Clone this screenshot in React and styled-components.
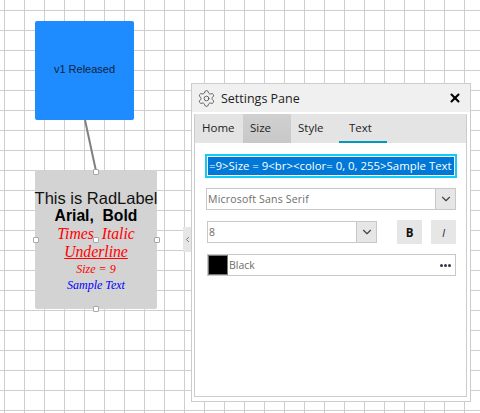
import React from 'react';
import styled, { createGlobalStyle } from 'styled-components';
import { Settings, X, ChevronDown, ChevronLeft } from 'lucide-react';

const Global = createGlobalStyle`
	html, body { margin: 0; padding: 0; background: #fff; }
	* { box-sizing: border-box; }
`;

const Canvas = styled.div`
	position: relative;
	width: 480px;
	height: 413px;
	overflow: hidden;
	background-color: #fff;
	background-image:
		linear-gradient(to right, #cfcfcf 1px, transparent 1px),
		linear-gradient(to bottom, #cfcfcf 1px, transparent 1px);
	background-size: 20px 20px;
	background-position: 4px 10px;
`;

const Connector = styled.svg`
	position: absolute;
	left: 0;
	top: 0;
`;

const Shape = styled.div`
	position: absolute;
	left: ${p => p.x}px;
	top: ${p => p.y}px;
	width: ${p => p.w}px;
	height: ${p => p.h}px;
	background: ${p => p.bg};
	border-radius: 2px;
	padding-bottom: ${p => p.lift || 0}px;
	padding-top: ${p => p.drop || 0}px;
	display: flex;
	flex-direction: column;
	align-items: center;
	justify-content: center;
`;

const ShapeCaption = styled.span`
	font: 11px "Liberation Sans", Arial, sans-serif;
	color: #10233a;
`;

const RichLine = styled.div`
	font-family: ${p => (p.serif ? '"Liberation Serif", serif' : '"Liberation Sans", Arial, sans-serif')};
	font-size: ${p => p.size}px;
	font-weight: ${p => (p.bold ? 700 : 400)};
	font-style: ${p => (p.serif ? 'italic' : 'normal')};
	text-decoration: ${p => (p.underline ? 'underline' : 'none')};
	color: ${p => p.color};
	line-height: ${p => p.lh}px;
	white-space: nowrap;
`;

const Handle = styled.span`
	position: absolute;
	left: ${p => p.x - 3}px;
	top: ${p => p.y - 3}px;
	width: 6px;
	height: 6px;
	background: #fff;
	border: 1px solid #a8a8a8;
	border-radius: 1px;
`;

const DockTab = styled.div`
	position: absolute;
	left: 183px;
	top: 227px;
	width: 9px;
	height: 25px;
	background: #e6e6e6;
	display: flex;
	align-items: center;
	color: #555;
`;

const Pane = styled.div`
	position: absolute;
	left: 191px;
	top: 83px;
	width: 280px;
	height: 319px;
	background: #fff;
	border: 1px solid #ccc;
	display: flex;
	flex-direction: column;
`;

const TitleBar = styled.div`
	height: 28px;
	background: #f0f0f0;
	display: flex;
	align-items: center;
	padding: 0 8px 0 5px;
	gap: 5px;
	flex: none;
`;

const Title = styled.span`
	font: 12.5px "Open Sans", "Noto Sans", sans-serif;
	color: #222;
	flex: 1;
`;

const Body = styled.div`
	flex: 1;
	margin: 2px 3px 4px 2px;
	border: 1px solid #ccc;
	border-top: 0;
	display: flex;
	flex-direction: column;
`;

const TabStrip = styled.div`
	display: flex;
	height: 29px;
	background: #e4e4e4;
	flex: none;
`;

const Tab = styled.div`
	width: 48px;
	font: 11.5px "Open Sans", "Noto Sans", sans-serif;
	color: #222;
	padding: 6px 0 0 ${p => p.pad}px;
	background: ${p => (p.hover ? 'linear-gradient(to bottom, #d0d0d0, #c8c8c8)' : 'transparent')};
	border-bottom: ${p => (p.active ? '2px solid #0099bb' : '0')};
`;

const Form = styled.div`
	padding: 11px 10px 0 11px;
	display: flex;
	flex-direction: column;
`;

const TextBox = styled.div`
	height: 24px;
	width: 252px;
	margin-left: -1px;
	border: 2px solid #14cbf5;
	padding: 1px;
	background: #fff;
	overflow: hidden;
`;

const Selected = styled.div`
	height: 18px;
	background: #0078d7;
	color: #fff;
	padding-left: 1px;
	font: 11.4px/18px "Open Sans", "Noto Sans", sans-serif;
	white-space: nowrap;
	overflow: hidden;
`;

const Combo = styled.div`
	display: flex;
	height: 22px;
	width: ${p => p.w}px;
	margin-top: ${p => p.top || 0}px;
	border: 1px solid #c8c8c8;
	background: #fff;
`;

const ComboText = styled.span`
	flex: 1;
	font: 10.5px/20px "Open Sans", "Noto Sans", sans-serif;
	color: #6d6d6d;
	padding-left: 1px;
	letter-spacing: 0.2px;
`;

const ComboArrow = styled.span`
	width: 20px;
	background: #e6e6e6;
	border-left: 1px solid #c8c8c8;
	display: flex;
	align-items: center;
	justify-content: center;
	color: #444;
`;

const FontRow = styled.div`
	display: flex;
	align-items: center;
	margin: 10px 0 10px 1px;
`;

const StyleButton = styled.div`
	width: 25px;
	height: 24px;
	margin-left: ${p => p.gap}px;
	background: #e6e6e6;
	display: flex;
	align-items: center;
	justify-content: center;
	font: ${p => (p.italic ? 'italic 400' : '700')} 11.5px "Open Sans", "Noto Sans", sans-serif;
	color: ${p => (p.italic ? '#334' : '#111')};
`;

const ColorBox = styled.div`
	display: flex;
	align-items: center;
	width: 249px;
	height: 22px;
	margin-left: 1px;
	border: 1px solid #c8c8c8;
	background: #fff;
	padding-right: 4px;
`;

const Swatch = styled.span`
	width: 20px;
	height: 20px;
	background: #000;
	border: 1px solid #777;
`;

const ColorName = styled.span`
	flex: 1;
	font: 10.5px "Open Sans", "Noto Sans", sans-serif;
	color: #6d6d6d;
	padding-left: 1px;
`;

const Dots = styled.span`
	display: flex;
	gap: 1px;
`;

const Dot = styled.i`
	width: 3px;
	height: 3px;
	border-radius: 50%;
	background: #33334d;
`;

const App = () => (
	<Canvas>
		<Global />
		<Connector width="480" height="413">
			<line x1="85" y1="120" x2="96" y2="171" stroke="#808080" strokeWidth="2" />
		</Connector>

		<Shape x={35} y={21} w={99} h={99} bg="#1e8cff" lift={3}>
			<ShapeCaption>v1 Released</ShapeCaption>
		</Shape>

		<Shape x={35} y={170} w={122} h={139} bg="#d3d3d3" drop={3}>
			<RichLine size={16.5} lh={18} color="#111">This is RadLabel</RichLine>
			<RichLine size={15.7} lh={18} bold color="#000">Arial,&nbsp; Bold</RichLine>
			<RichLine serif size={15.7} lh={18} color="#f00">Times, Italic</RichLine>
			<RichLine serif underline size={15.7} lh={18} color="#f00">Underline</RichLine>
			<RichLine serif size={12} lh={17} color="#f00">Size = 9</RichLine>
			<RichLine serif size={12} lh={15} color="#00f">Sample Text</RichLine>
		</Shape>

		<Handle x={96} y={172} />
		<Handle x={36} y={240} />
		<Handle x={96} y={240} />
		<Handle x={157} y={240} />
		<Handle x={96} y={309} />

		<DockTab>
			<ChevronLeft size={9} strokeWidth={2} />
		</DockTab>

		<Pane>
			<TitleBar>
				<Settings size={19} strokeWidth={1} color="#444" />
				<Title>Settings Pane</Title>
				<X size={14} strokeWidth={3.5} color="#000" />
			</TitleBar>
			<Body>
				<TabStrip>
					<Tab pad={7}>Home</Tab>
					<Tab pad={7} hover>Size</Tab>
					<Tab pad={7}>Style</Tab>
					<Tab pad={10} active>Text</Tab>
				</TabStrip>
				<Form>
					<TextBox>
						<Selected>=9&gt;Size = 9&lt;br&gt;&lt;color= 0, 0, 255&gt;Sample Text</Selected>
					</TextBox>
					<Combo w={250} top={10}>
						<ComboText>Microsoft Sans Serif</ComboText>
						<ComboArrow><ChevronDown size={14} strokeWidth={2} /></ComboArrow>
					</Combo>
					<FontRow>
						<Combo w={170}>
							<ComboText>8</ComboText>
							<ComboArrow><ChevronDown size={14} strokeWidth={2} /></ComboArrow>
						</Combo>
						<StyleButton gap={20}>B</StyleButton>
						<StyleButton gap={9} italic>I</StyleButton>
					</FontRow>
					<ColorBox>
						<Swatch />
						<ColorName>Black</ColorName>
						<Dots><Dot /><Dot /><Dot /></Dots>
					</ColorBox>
				</Form>
			</Body>
		</Pane>
	</Canvas>
);

export default App;
